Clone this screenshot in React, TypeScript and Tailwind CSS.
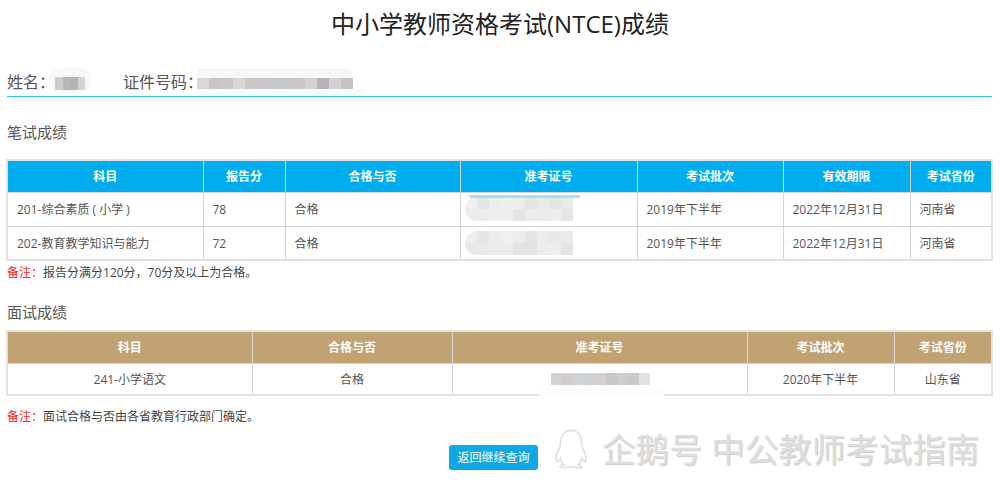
const nameCells = ["#cdcdcd", "#b8b8b8", "#b4b4b4", "#d4d4d4"];
const idCells = ["#d8d8d8", "#c6c6c6", "#c8c8cb", "#d8d8d8", "#cdc6c4", "#c8c8cc", "#c4c8ce", "#c8c6c6", "#c8c8c8", "#d2d2d2", "#b4b4b8", "#d2d2d2", "#c4c4c4"];
const ticketA = [
  ["#efefef", "#e3e5e5", "#ededed", "#efefef", "#efedeb", "#e3e4e6", "#e9ebeb", "#e5e5e5", "#eaeaea"],
  ["#ececec", "#eaecee", "#eeeeec", "#eeeeee", "#e5e5e5", "#ececec", "#ececec", "#eeeeee", "#e6e6e6"],
];
const ticketB = [
  ["#eeeeee", "#e6e6e6", "#ececec", "#f0f0f0", "#eeedeb", "#e4e5e8", "#ebecec", "#e8e8e8", "#ebebeb"],
  ["#e9e9e9", "#e9e9e9", "#ececec", "#ececec", "#e3e3e3", "#e3e3e3", "#ececec", "#eeeeee", "#e3e3e3"],
];
const faceCells = ["#d2d2d2", "#d4ccca", "#d0d3d6", "#cdd1d6", "#d6cfcd", "#c8c8c8", "#cdcdcd", "#cbc9c6", "#dfe1e7"];

function Mosaic({ rows, size }: { rows: string[][]; size: string }) {
  return (
    <span className="inline-flex flex-col align-middle">
      {rows.map((row, r) => (
        <span key={r} className="flex">
          {row.map((color, c) => (
            <span key={c} className={size} style={{ background: color }} />
          ))}
        </span>
      ))}
    </span>
  );
}

function Penguin() {
  return (
    <svg width="36" height="40" viewBox="0 0 36 42" fill="none">
      <path
        d="M18 1.5C10 1.5 7 8 7 15C7 19 5 21 3.5 25C2.5 28 2 32 3 34.5C5 34 6 32.5 7 31C7.5 34 9 36 10.5 37.5C8 38 6 39 6.5 40C9 41 14 40.5 16.5 39.5C17.5 39.7 18.5 39.7 19.5 39.5C22 40.5 27 41 29.5 40C30 39 28 38 25.5 37.5C27 36 28.5 34 29 31C30 32.5 31 34 33 34.5C34 32 33.5 28 32.5 25C31 21 29 19 29 15C29 8 26 1.5 18 1.5Z"
        stroke="#e2e2e2"
        strokeWidth="2"
        fill="#ffffff"
      />
    </svg>
  );
}

const th = "border border-[#d5d5d5] font-bold text-[12px] text-white text-center px-0 pt-[2px] pb-0";
const cell = "border border-[#d5d5d5] text-[12px] text-[#555555]";
const td = `${cell} pt-[2px] pb-0`;
const tdBlur = `${cell} py-0`;

export default function App() {
  return (
    <div
      className="relative w-[1000px] h-[483px] overflow-hidden bg-white px-[7px] text-[#555555]"
      style={{ fontFamily: '"Open Sans", "Noto Sans CJK SC", sans-serif' }}
    >
      <h1 className="h-[48px] leading-[48px] text-center text-[24px] font-normal text-[#222222]">
        中小学教师资格考试(NTCE)成绩
      </h1>

      {/* Name row */}
      <div className="mt-[19px] h-[30px] w-[985px] flex items-center border-b border-[#2fc0f2] text-[16px] text-[#555555]">
        <span>姓名：</span>
        <span className="relative ml-0 mt-[4px] flex">
          <span className="absolute left-[-6px] top-[-10px] h-[26px] w-[42px] rounded-[12px] bg-[#f8f8f8]" />
          <span className="relative flex">
            <Mosaic rows={[nameCells]} size="w-[7.5px] h-[13px]" />
          </span>
        </span>
        <span className="ml-[38px]">证件号码：</span>
        <span className="relative ml-[-6px] mt-[4px] flex">
          <span className="absolute left-0 top-[-10px] h-[10px] w-[155px] rounded-t-[6px] bg-[#f7f7f7]" />
          <span className="absolute left-[-2px] top-[11px] h-[7px] w-[172px] rounded-b-[8px] bg-[#f6fbfd]" />
          <span className="relative flex">
            <Mosaic rows={[idCells]} size="w-[12px] h-[11px]" />
          </span>
        </span>
      </div>

      <h2 className="mt-[24px] h-[22px] leading-[22px] text-[15px] font-normal text-[#555555]">笔试成绩</h2>

      <table className="mt-[16px] -ml-px w-[985px] table-fixed border-collapse border-2 border-[#e2e2e2]">
        <colgroup>
          <col className="w-[196px]" />
          <col className="w-[82px]" />
          <col className="w-[175px]" />
          <col className="w-[177px]" />
          <col className="w-[146px]" />
          <col className="w-[127px]" />
          <col className="w-[82px]" />
        </colgroup>
        <thead>
          <tr className="h-[32px] bg-[#00aeef]">
            <th className={th}>科目</th>
            <th className={th}>报告分</th>
            <th className={th}>合格与否</th>
            <th className={th}>准考证号</th>
            <th className={th}>考试批次</th>
            <th className={th}>有效期限</th>
            <th className={th}>考试省份</th>
          </tr>
        </thead>
        <tbody>
          <tr className="h-[34px]">
            <td className={`${td} pl-[9px]`}>201-综合素质 ( 小学 )</td>
            <td className={`${td} pl-[9px]`}>78</td>
            <td className={`${td} pl-[9px]`}>合格</td>
            <td className={`${tdBlur} relative pl-[4px]`}>
              <span className="absolute left-[8px] top-[2px] h-[3px] w-[111px] rounded-full bg-[#a6dff5]" />
              <span className="flex overflow-hidden rounded-l-[12px]">
                <Mosaic rows={ticketA} size="w-[12px] h-[12px]" />
              </span>
            </td>
            <td className={`${td} pl-[9px]`}>2019年下半年</td>
            <td className={`${td} pl-[9px]`}>2022年12月31日</td>
            <td className={`${td} pl-[9px]`}>河南省</td>
          </tr>
          <tr className="h-[34px]">
            <td className={`${td} pl-[9px]`}>202-教育教学知识与能力</td>
            <td className={`${td} pl-[9px]`}>72</td>
            <td className={`${td} pl-[9px]`}>合格</td>
            <td className={`${tdBlur} pl-[4px]`}>
              <span className="flex overflow-hidden rounded-l-[12px]">
                <Mosaic rows={ticketB} size="w-[12px] h-[12px]" />
              </span>
            </td>
            <td className={`${td} pl-[9px]`}>2019年下半年</td>
            <td className={`${td} pl-[9px]`}>2022年12月31日</td>
            <td className={`${td} pl-[9px]`}>河南省</td>
          </tr>
        </tbody>
      </table>

      <p className="mt-[3px] h-[18px] leading-[18px] text-[12px] text-[#444444]">
        <span className="text-[#ff2020]">备注：</span>报告分满分120分，70分及以上为合格。
      </p>

      <h2 className="mt-[19px] h-[22px] leading-[22px] text-[15px] font-normal text-[#555555]">面试成绩</h2>

      <table className="mt-[7px] -ml-px w-[985px] table-fixed border-collapse border-2 border-[#e2e2e2]">
        <colgroup>
          <col className="w-[245px]" />
          <col className="w-[200px]" />
          <col className="w-[295px]" />
          <col className="w-[147px]" />
          <col className="w-[98px]" />
        </colgroup>
        <thead>
          <tr className="h-[32px] bg-[#c1a272]">
            <th className={th}>科目</th>
            <th className={th}>合格与否</th>
            <th className={th}>准考证号</th>
            <th className={th}>考试批次</th>
            <th className={th}>考试省份</th>
          </tr>
        </thead>
        <tbody>
          <tr className="h-[32px] text-center">
            <td className={td}>241-小学语文</td>
            <td className={td}>合格</td>
            <td className={`${tdBlur} relative`}>
              <span className="absolute bottom-[-2px] left-[86px] h-[8px] w-[125px] bg-[#fdfdfd]" />
              <span className="relative flex justify-center pl-[1px]">
                <Mosaic rows={[faceCells]} size="w-[11px] h-[12px]" />
              </span>
            </td>
            <td className={td}>2020年下半年</td>
            <td className={td}>山东省</td>
          </tr>
        </tbody>
      </table>

      <p className="mt-[12px] h-[18px] leading-[18px] text-[12px] text-[#444444]">
        <span className="text-[#ff2020]">备注：</span>面试合格与否由各省教育行政部门确定。
      </p>

      <div className="mt-[19px] flex justify-center">
        <button className="ml-[-13px] h-[25px] w-[89px] rounded-[3px] bg-[#0fa8e4] text-[12px] text-white">
          返回继续查询
        </button>
      </div>

      {/* Watermark over the page */}
      <div className="absolute left-[553px] top-[427px] flex items-center">
        <Penguin />
        <span
          className="ml-[13px] text-[33.5px] leading-[44px] text-[#dedede] whitespace-nowrap"
          style={{ textShadow: "1px 1px 1px #cccccc" }}
        >
          企鹅号 中公教师考试指南
        </span>
      </div>
    </div>
  );
}
